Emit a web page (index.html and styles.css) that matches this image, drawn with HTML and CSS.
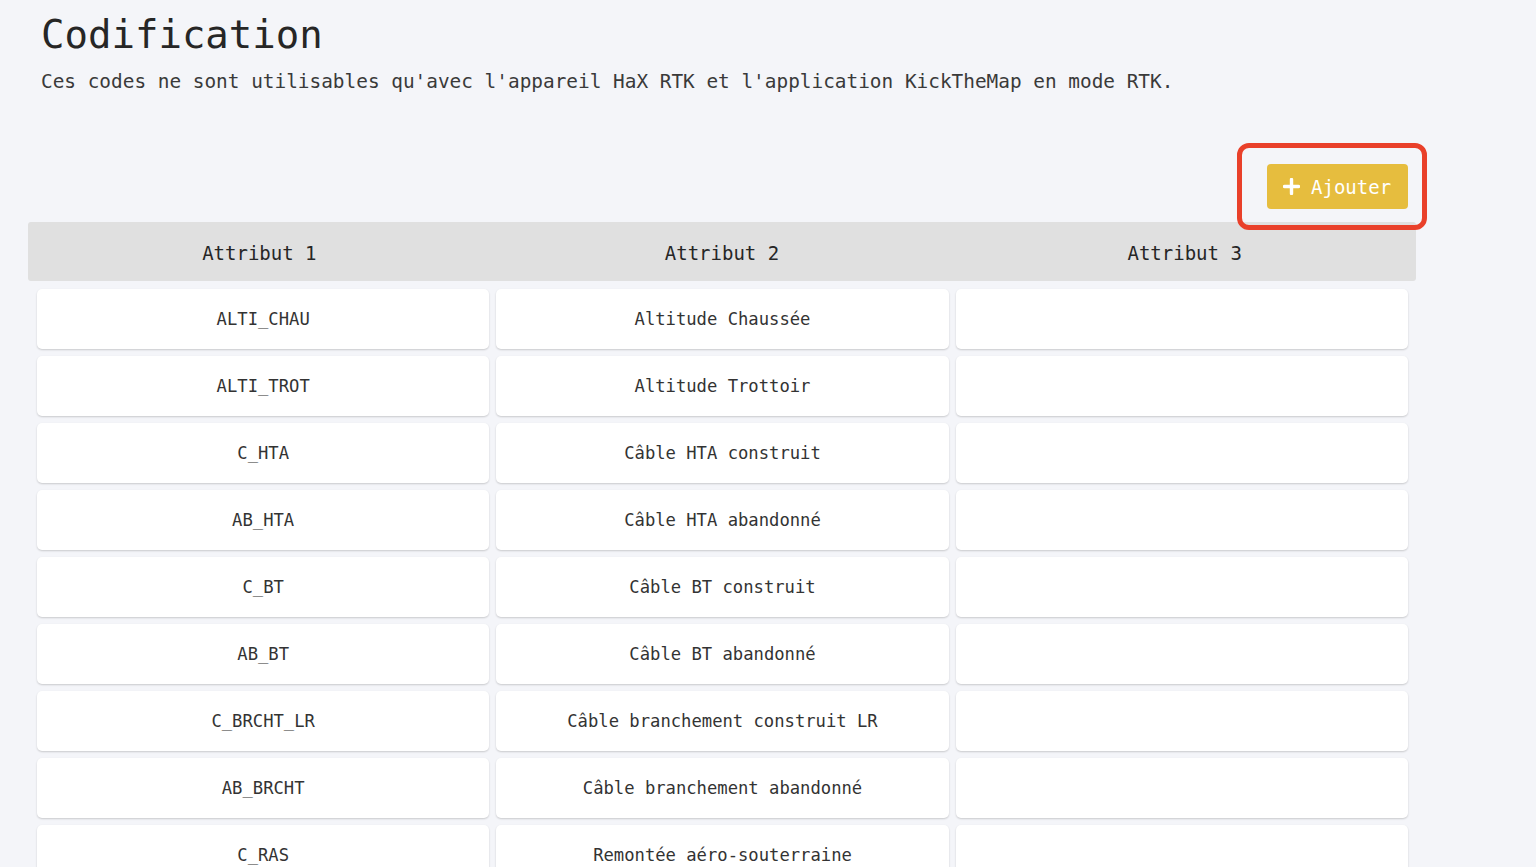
FILE: index.html
```html
<!DOCTYPE html>
<html lang="fr">
<head>
<meta charset="utf-8">
<title>Codification</title>
<link rel="stylesheet" href="styles.css">
</head>
<body>
<div class="page">
  <h1 class="title">Codification</h1>
  <p class="subtitle">Ces codes ne sont utilisables qu'avec l'appareil HaX RTK et l'application KickTheMap en mode RTK.</p>
  <div class="toolbar">
    <div class="btn-wrap">
      <button class="btn-add">
        <svg class="plus" width="17" height="17" viewBox="0 0 17 17"><path d="M8.5 1.5v14M1.5 8.5h14" stroke="#fff" stroke-width="3.4" stroke-linecap="round"/></svg>
        <span>Ajouter</span>
      </button>
      <div class="highlight"></div>
    </div>
  </div>
  <div class="table">
    <div class="thead">
      <div class="th">Attribut 1</div>
      <div class="th">Attribut 2</div>
      <div class="th">Attribut 3</div>
    </div>
    <div class="tbody">
      <div class="td">ALTI_CHAU</div><div class="td">Altitude Chaussée</div><div class="td"></div>
      <div class="td">ALTI_TROT</div><div class="td">Altitude Trottoir</div><div class="td"></div>
      <div class="td">C_HTA</div><div class="td">Câble HTA construit</div><div class="td"></div>
      <div class="td">AB_HTA</div><div class="td">Câble HTA abandonné</div><div class="td"></div>
      <div class="td">C_BT</div><div class="td">Câble BT construit</div><div class="td"></div>
      <div class="td">AB_BT</div><div class="td">Câble BT abandonné</div><div class="td"></div>
      <div class="td">C_BRCHT_LR</div><div class="td">Câble branchement construit LR</div><div class="td"></div>
      <div class="td">AB_BRCHT</div><div class="td">Câble branchement abandonné</div><div class="td"></div>
      <div class="td">C_RAS</div><div class="td">Remontée aéro-souterraine</div><div class="td"></div>
    </div>
  </div>
</div>
</body>
</html>
```
FILE: styles.css
```css
html, body {
  margin: 0;
  padding: 0;
  background: #f4f5f9;
  height: 867px;
  overflow: hidden;
}
body {
  font-family: "DejaVu Sans Mono", "Liberation Mono", monospace;
  color: #333;
}
.page {
  width: 1388px;
  margin-left: 28px;
}
.title {
  margin: 12px 0 0 13px;
  font-size: 39px;
  line-height: 46px;
  font-weight: normal;
  color: #262626;
}
.subtitle {
  margin: 12px 0 0 13px;
  font-size: 19.4px;
  line-height: 24px;
  color: #3a3a3a;
}
.toolbar {
  display: flex;
  justify-content: flex-end;
  margin-top: 70px;
  padding-right: 8px;
}
.btn-wrap {
  position: relative;
}
.btn-add {
  display: flex;
  align-items: center;
  gap: 11px;
  width: 141px;
  height: 45px;
  padding: 0 0 0 16px;
  border: none;
  border-radius: 4px;
  background: #e6bd3e;
  color: #fff;
  font-family: "DejaVu Sans Mono", "Liberation Mono", monospace;
  font-size: 19px;
}
.highlight {
  position: absolute;
  left: -30px;
  top: -21px;
  width: 180px;
  height: 77px;
  border: 5.5px solid #e9402a;
  border-radius: 12px;
}
.table {
  margin-top: 13px;
}
.thead {
  display: grid;
  grid-template-columns: repeat(3, 1fr);
  height: 59px;
  background: #e0e0e0;
  border-radius: 3px;
}
.th {
  display: flex;
  align-items: center;
  justify-content: center;
  padding-top: 2px;
  font-size: 19px;
  color: #262626;
}
.tbody {
  display: grid;
  grid-template-columns: repeat(3, 1fr);
  gap: 7px;
  padding: 8px 8px 0 9px;
}
.td {
  display: flex;
  align-items: center;
  justify-content: center;
  height: 60px;
  padding-top: 1px;
  box-sizing: border-box;
  background: #fff;
  border-radius: 5px;
  box-shadow: 0 1px 2px rgba(0, 0, 0, 0.18);
  font-size: 17.2px;
  line-height: 1.4;
  color: #333;
}
```
